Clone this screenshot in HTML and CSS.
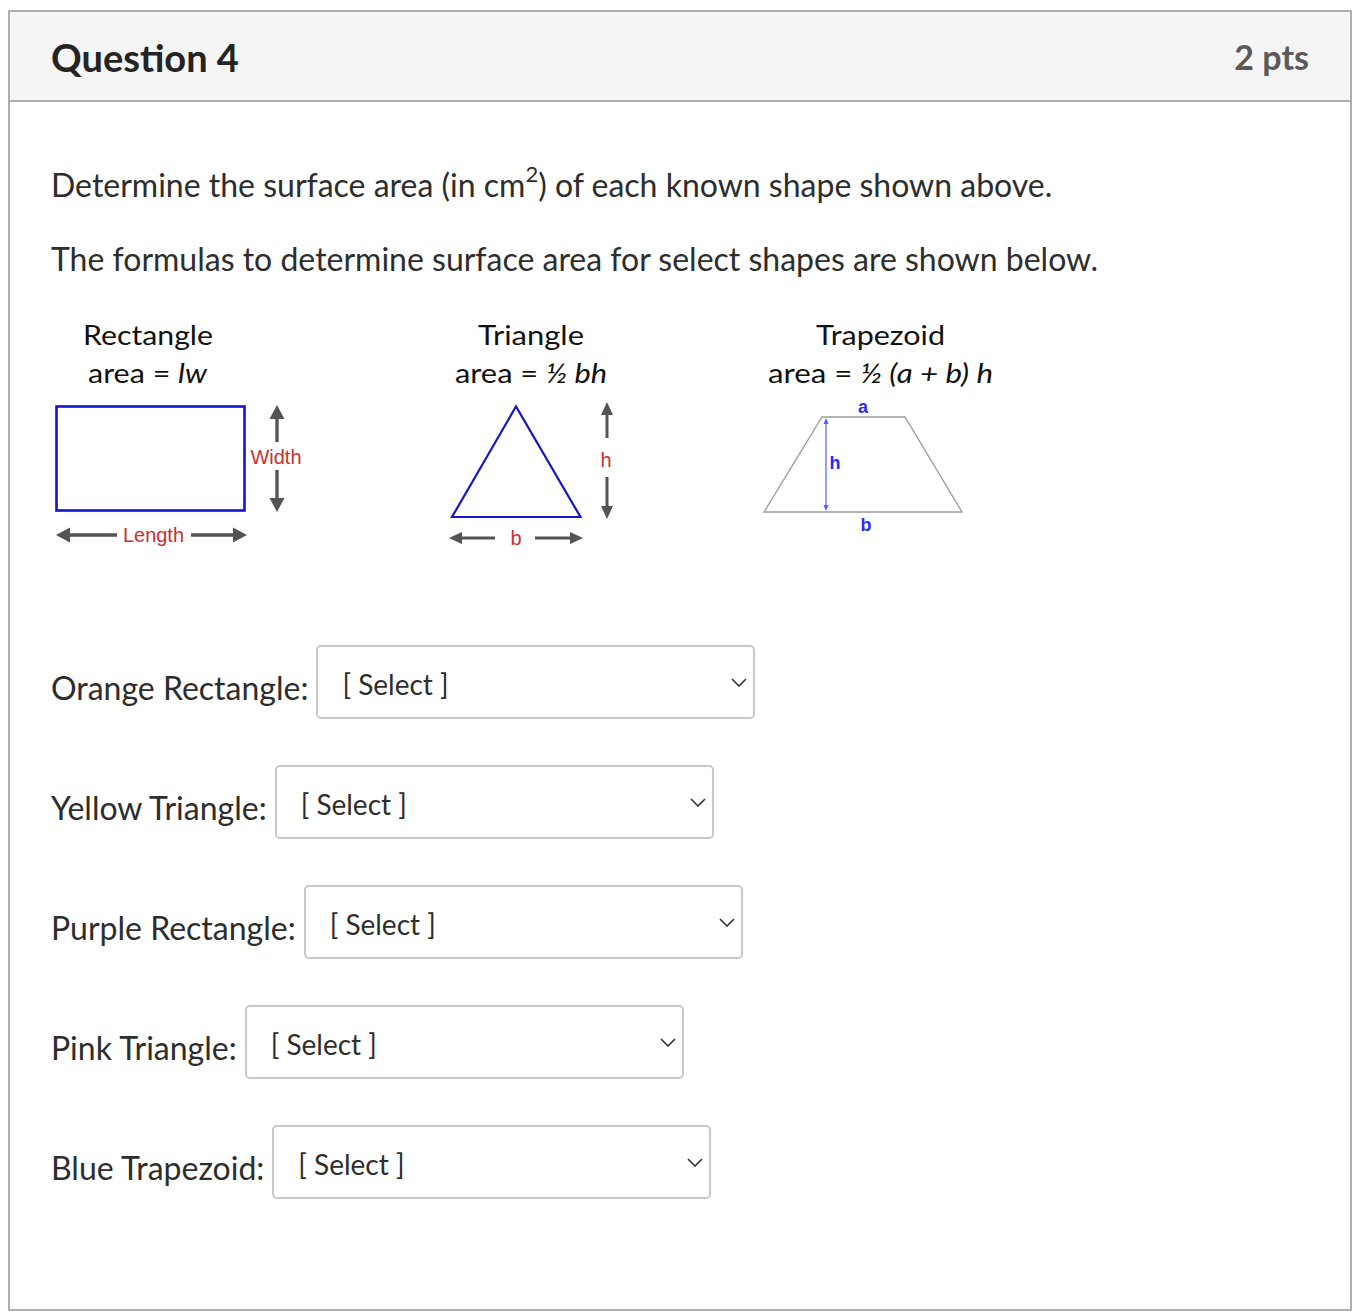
FILE: index.html
```html
<!DOCTYPE html>
<html lang="en">
<head>
<meta charset="utf-8">
<title>Question 4</title>
<link rel="stylesheet" href="styles.css">
</head>
<body>
<div class="page">
  <div class="question">
    <div class="q-header">
      <h2 class="q-title">Question 4</h2>
      <div class="q-pts">2 pts</div>
    </div>
    <div class="q-body">
      <p class="q-text">Determine the surface area (in cm<sup>2</sup>) of each known shape shown above.</p>
      <p class="q-text">The formulas to determine surface area for select shapes are shown below.</p>
      <svg class="formulas" width="960" height="250" viewBox="51 305 960 250" xmlns="http://www.w3.org/2000/svg">
        <g class="f-title">
          <text x="148" y="345" text-anchor="middle" textLength="130" lengthAdjust="spacingAndGlyphs">Rectangle</text>
          <text x="147.5" y="383" text-anchor="middle" textLength="119" lengthAdjust="spacingAndGlyphs">area = <tspan font-style="italic">lw</tspan></text>
          <text x="531" y="345" text-anchor="middle" textLength="106" lengthAdjust="spacingAndGlyphs">Triangle</text>
          <text x="531" y="383" text-anchor="middle" textLength="152" lengthAdjust="spacingAndGlyphs">area = <tspan font-style="italic">½ bh</tspan></text>
          <text x="880.5" y="345" text-anchor="middle" textLength="129" lengthAdjust="spacingAndGlyphs">Trapezoid</text>
          <text x="880.5" y="383" text-anchor="middle" textLength="225" lengthAdjust="spacingAndGlyphs">area = <tspan font-style="italic">½ (a + b) h</tspan></text>
        </g>
        <!-- rectangle -->
        <rect x="56.5" y="406.5" width="188" height="104" fill="none" stroke="#1515c8" stroke-width="2.6"/>
        <g class="arrow">
          <line x1="277" y1="418" x2="277" y2="442"/>
          <polygon points="277,405 269.5,419 284.5,419"/>
          <line x1="277" y1="470" x2="277" y2="498"/>
          <polygon points="277,512 269.5,498 284.5,498"/>
          <line x1="69" y1="535" x2="117" y2="535"/>
          <polygon points="56,535 70,527.5 70,542.5"/>
          <line x1="191" y1="535" x2="234" y2="535"/>
          <polygon points="247,535 233,527.5 233,542.5"/>
        </g>
        <text class="lbl-red" x="276" y="463.5" text-anchor="middle" textLength="51" lengthAdjust="spacingAndGlyphs">Width</text>
        <text class="lbl-red" x="153.5" y="541.5" text-anchor="middle" textLength="61" lengthAdjust="spacingAndGlyphs">Length</text>
        <!-- triangle -->
        <polygon points="516,406.5 452,517 580.5,517" fill="none" stroke="#1515c8" stroke-width="2.2" stroke-linejoin="miter"/>
        <g class="arrow thin">
          <line x1="607" y1="414" x2="607" y2="438"/>
          <polygon points="607,402 601,415 613,415"/>
          <line x1="607" y1="477" x2="607" y2="507"/>
          <polygon points="607,519 601,506 613,506"/>
          <line x1="461" y1="538" x2="495" y2="538"/>
          <polygon points="449,538 462,532 462,544"/>
          <line x1="535" y1="538" x2="571" y2="538"/>
          <polygon points="583,538 570,532 570,544"/>
        </g>
        <text class="lbl-red" x="606" y="467" text-anchor="middle">h</text>
        <text class="lbl-red" x="516" y="545" text-anchor="middle">b</text>
        <!-- trapezoid -->
        <polygon points="822,417 905,417 962,512 764,512" fill="none" stroke="#9c9c9c" stroke-width="1.3"/>
        <line x1="826" y1="422" x2="826" y2="507" stroke="#5160ff" stroke-width="1.2"/>
        <polygon points="826,418 823.5,424 828.5,424" fill="#5160ff"/>
        <polygon points="826,511 823.5,505 828.5,505" fill="#5160ff"/>
        <text class="lbl-blue" x="863" y="413" text-anchor="middle" font-size="15">a</text>
        <text class="lbl-blue" x="835" y="469" text-anchor="middle">h</text>
        <text class="lbl-blue" x="866" y="531" text-anchor="middle">b</text>
      </svg>

      <div class="answers">
        <div class="answer-row">
          <span class="answer-label">Orange Rectangle:</span>
          <div class="select-box"><span class="select-text">[ Select ]</span><svg class="chev" width="16" height="9" viewBox="0 0 16 9"><path d="M1 1 L8 8 L15 1" fill="none" stroke="#333" stroke-width="1.6"/></svg></div>
        </div>
        <div class="answer-row">
          <span class="answer-label">Yellow Triangle:</span>
          <div class="select-box"><span class="select-text">[ Select ]</span><svg class="chev" width="16" height="9" viewBox="0 0 16 9"><path d="M1 1 L8 8 L15 1" fill="none" stroke="#333" stroke-width="1.6"/></svg></div>
        </div>
        <div class="answer-row">
          <span class="answer-label">Purple Rectangle:</span>
          <div class="select-box"><span class="select-text">[ Select ]</span><svg class="chev" width="16" height="9" viewBox="0 0 16 9"><path d="M1 1 L8 8 L15 1" fill="none" stroke="#333" stroke-width="1.6"/></svg></div>
        </div>
        <div class="answer-row">
          <span class="answer-label">Pink Triangle:</span>
          <div class="select-box"><span class="select-text">[ Select ]</span><svg class="chev" width="16" height="9" viewBox="0 0 16 9"><path d="M1 1 L8 8 L15 1" fill="none" stroke="#333" stroke-width="1.6"/></svg></div>
        </div>
        <div class="answer-row">
          <span class="answer-label">Blue Trapezoid:</span>
          <div class="select-box"><span class="select-text">[ Select ]</span><svg class="chev" width="16" height="9" viewBox="0 0 16 9"><path d="M1 1 L8 8 L15 1" fill="none" stroke="#333" stroke-width="1.6"/></svg></div>
        </div>
      </div>
    </div>
  </div>
</div>
</body>
</html>
```
FILE: styles.css
```css
html, body {
  margin: 0;
  padding: 0;
  background: #ffffff;
}
body {
  font-family: Lato, "Open Sans", "Liberation Sans", sans-serif;
  color: #2d3b45;
}
.page {
  padding: 10px 4px 7px 8px;
}
.question {
  width: 1340px;
  border: 2px solid #aeaeae;
  background: #ffffff;
}
.q-header {
  height: 90px;
  box-sizing: border-box;
  background: #f5f5f5;
  border-bottom: 2px solid #aeaeae;
  display: flex;
  align-items: center;
  justify-content: space-between;
  padding: 1px 41px 0 41px;
}
.q-title {
  margin: 0;
  font-size: 38px;
  font-weight: 700;
  color: #242424;
}
.q-pts {
  font-size: 34px;
  font-weight: 700;
  color: #5a5a5a;
}
.q-body {
  padding: 59px 41px 110px 41px;
}
.q-text {
  margin: 0 0 26px 0;
  font-size: 32px;
  line-height: 48px;
  color: #2d2d2d;
}
.q-text sup {
  font-size: 22px;
  line-height: 0;
  vertical-align: 15px;
}
.formulas {
  display: block;
  margin-top: -4px;
}
.f-title text {
  font-family: Lato, "Open Sans", sans-serif;
  font-size: 27px;
  fill: #111111;
}
.arrow line {
  stroke: #545454;
  stroke-width: 3.4;
}
.arrow polygon {
  fill: #545454;
}
.arrow.thin line {
  stroke-width: 3;
}
.lbl-red {
  font-family: "Liberation Sans", Arial, sans-serif;
  font-size: 20px;
  fill: #c93030;
}
.lbl-blue {
  font-family: "Liberation Sans", Arial, sans-serif;
  font-size: 18px;
  font-weight: 700;
  fill: #2b2bea;
}
.answers {
  margin-top: 90px;
  display: flex;
  flex-direction: column;
  gap: 46px;
}
.answer-row {
  display: flex;
  align-items: flex-start;
}
.answer-label {
  font-size: 32px;
  line-height: 46px;
  margin-top: 20px;
  margin-right: 8px;
  color: #2d2d2d;
}
.select-box {
  width: 439px;
  height: 74px;
  flex: none;
  box-sizing: border-box;
  border: 2px solid #c8c8c8;
  border-radius: 5px;
  display: flex;
  align-items: center;
  justify-content: space-between;
  padding: 3px 6px 0 24px;
}
.select-text {
  font-size: 28px;
  color: #2d2d2d;
}
.chev {
  display: block;
  margin-top: -3px;
}
```
